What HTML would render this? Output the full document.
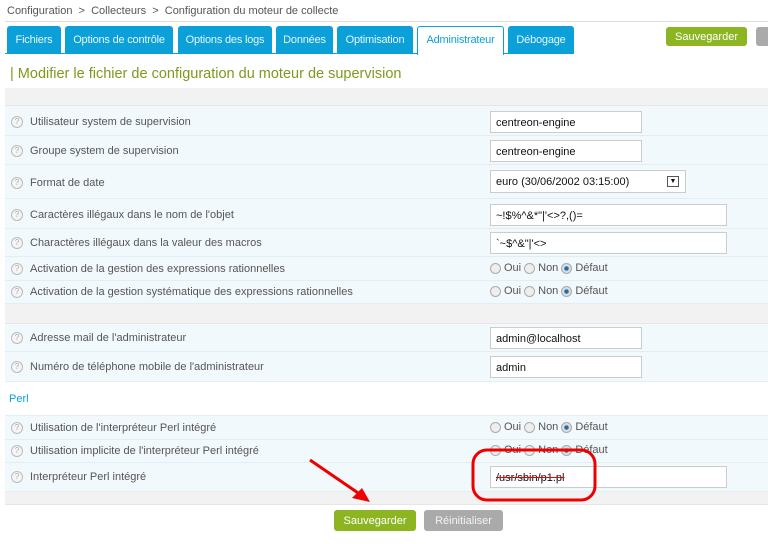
<!DOCTYPE html><html><head><meta charset="utf-8"><style>
*{margin:0;padding:0;box-sizing:border-box}
body{width:768px;height:544px;overflow:hidden;background:#fff;font-family:"Liberation Sans",sans-serif;font-size:11px;color:#444;position:relative}
.a{position:absolute}
.tab{position:absolute;top:26px;height:28px;background:#0ca0d9;color:#e6f5fb;font-size:11px;line-height:28px;text-align:center;border-radius:3px 3px 0 0;letter-spacing:-0.2px}
.row{position:absolute;left:5px;right:0;background:#f2f9fc;border-bottom:1px solid #e3edf2}
.gray{position:absolute;left:5px;right:0;background:#f2f2f2;border-bottom:1px solid #e6e6e6}
.lbl{position:absolute;left:30px;font-size:11px;color:#555}
.q{position:absolute;left:11px;width:12px;height:12px;border:1px solid #bbb;border-radius:50%;font-size:8px;line-height:10px;text-align:center;color:#aaa;background:#f5f5f5}
.inp{position:absolute;left:490px;height:22px;border:1px solid #ccc;background:#fff;font-size:11px;color:#111;padding:5px 5px;white-space:nowrap}
.rad{position:absolute;left:490px;font-size:11px;color:#555;display:flex;align-items:center;gap:3px}
.r{width:11px;height:11px;border:1px solid #aaa;border-radius:50%;background:#eee;display:inline-block}
.r.on{background:radial-gradient(#1f6fa8 30%,#ddd 40%)}
.btn{position:absolute;display:flex;align-items:center;justify-content:center;border-radius:3px;color:#fff;font-size:11px}
</style></head><body>
<div class="a" style="left:7px;top:5px;font-size:11px;color:#555">Configuration &nbsp;&gt;&nbsp; Collecteurs &nbsp;&gt;&nbsp; Configuration du moteur de collecte</div>
<div class="a" style="left:5px;right:0;top:21px;height:1px;background:#ddd"></div>
<div class="tab" style="left:7px;width:54px">Fichiers</div>
<div class="tab" style="left:65px;width:108px">Options de contrôle</div>
<div class="tab" style="left:178px;width:94px">Options des logs</div>
<div class="tab" style="left:276px;width:57px">Données</div>
<div class="tab" style="left:337px;width:76px">Optimisation</div>
<div class="tab" style="left:417px;width:87px;background:#fff;border:1px solid #0ca0d9;border-bottom:none;color:#0ca0d9;height:29px;line-height:27px">Administrateur</div>
<div class="tab" style="left:508px;width:66px">Débogage</div>
<div class="a" style="left:5px;top:53px;width:412px;height:1px;background:#0ca0d9"></div>
<div class="a" style="left:504px;top:53px;width:70px;height:1px;background:#0ca0d9"></div>
<div class="btn" style="left:666px;top:27px;width:81px;height:19px;background:#8cb521">Sauvegarder</div>
<div class="a" style="left:756px;top:27px;width:20px;height:19px;background:#aaa;border-radius:3px"></div>
<div class="a" style="left:10px;top:66px;font-size:14.5px;color:#7b9a1e">| Modifier le fichier de configuration du moteur de supervision</div>
<div class="gray" style="top:88px;height:18px"></div>
<div class="row" style="top:106px;height:30px"></div><div class="q" style="top:116px">?</div><div class="lbl" style="top:116px">Utilisateur system de supervision</div><div class="inp" style="top:111px;width:152px">centreon-engine</div>
<div class="row" style="top:136px;height:29px"></div><div class="q" style="top:145px">?</div><div class="lbl" style="top:145px">Groupe system de supervision</div><div class="inp" style="top:140px;width:152px">centreon-engine</div>
<div class="row" style="top:165px;height:34px"></div><div class="q" style="top:177px">?</div><div class="lbl" style="top:177px">Format de date</div><div class="inp" style="top:170px;width:196px;height:23px">euro (30/06/2002 03:15:00)<span style="position:absolute;right:6px;top:5px;width:12px;height:11px;border:1px solid #555;font-size:7px;line-height:9px;text-align:center">▼</span></div>
<div class="row" style="top:199px;height:30px"></div><div class="q" style="top:209px">?</div><div class="lbl" style="top:209px">Caractères illégaux dans le nom de l'objet</div><div class="inp" style="top:204px;width:237px">~!$%^&amp;*"|'&lt;&gt;?,()=</div>
<div class="row" style="top:229px;height:28px"></div><div class="q" style="top:237px">?</div><div class="lbl" style="top:237px">Charactères illégaux dans la valeur des macros</div><div class="inp" style="top:232px;width:237px">`~$^&amp;"|'&lt;&gt;</div>
<div class="row" style="top:257px;height:24px"></div><div class="q" style="top:263px">?</div><div class="lbl" style="top:263px">Activation de la gestion des expressions rationnelles</div><div class="rad" style="top:262px"><span class="r"></span>Oui <span class="r"></span>Non <span class="r on"></span>Défaut</div>
<div class="row" style="top:281px;height:23px"></div><div class="q" style="top:286px">?</div><div class="lbl" style="top:286px">Activation de la gestion systématique des expressions rationnelles</div><div class="rad" style="top:285px"><span class="r"></span>Oui <span class="r"></span>Non <span class="r on"></span>Défaut</div>
<div class="gray" style="top:304px;height:20px"></div>
<div class="row" style="top:324px;height:28px"></div><div class="q" style="top:332px">?</div><div class="lbl" style="top:332px">Adresse mail de l'administrateur</div><div class="inp" style="top:327px;width:152px">admin@localhost</div>
<div class="row" style="top:352px;height:30px"></div><div class="q" style="top:361px">?</div><div class="lbl" style="top:361px">Numéro de téléphone mobile de l'administrateur</div><div class="inp" style="top:356px;width:152px">admin</div>
<div class="a" style="left:5px;right:0;top:382px;height:34px;background:#fff;border-bottom:1px solid #e3edf2"></div><div class="a" style="left:9px;top:393px;color:#0ca0d9;font-size:11px">Perl</div>
<div class="row" style="top:416px;height:24px"></div><div class="q" style="top:422px">?</div><div class="lbl" style="top:422px">Utilisation de l'interpréteur Perl intégré</div><div class="rad" style="top:421px"><span class="r"></span>Oui <span class="r"></span>Non <span class="r on"></span>Défaut</div>
<div class="row" style="top:440px;height:23px"></div><div class="q" style="top:445px">?</div><div class="lbl" style="top:445px">Utilisation implicite de l'interpréteur Perl intégré</div><div class="rad" style="top:444px"><span class="r"></span>Oui <span class="r"></span>Non <span class="r on"></span>Défaut</div>
<div class="row" style="top:463px;height:29px"></div><div class="q" style="top:471px">?</div><div class="lbl" style="top:471px">Interpréteur Perl intégré</div><div class="inp" style="top:466px;width:237px;text-decoration:line-through;text-decoration-color:#e00">/usr/sbin/p1.pl</div>
<div class="gray" style="top:492px;height:13px"></div>
<div class="btn" style="left:334px;top:510px;width:82px;height:21px;background:#8cb521">Sauvegarder</div>
<div class="btn" style="left:424px;top:510px;width:79px;height:21px;background:#aaa;color:#f4f4f4">Réinitialiser</div>
<svg class="a" style="left:0;top:0" width="768" height="544"><rect x="473" y="450" width="122" height="50" rx="14" fill="none" stroke="#e00" stroke-width="3"/><line x1="310" y1="460" x2="364" y2="497" stroke="#e00" stroke-width="3"/><polygon points="370,502 352,498 362,488" fill="#e00"/></svg>
</body></html>
